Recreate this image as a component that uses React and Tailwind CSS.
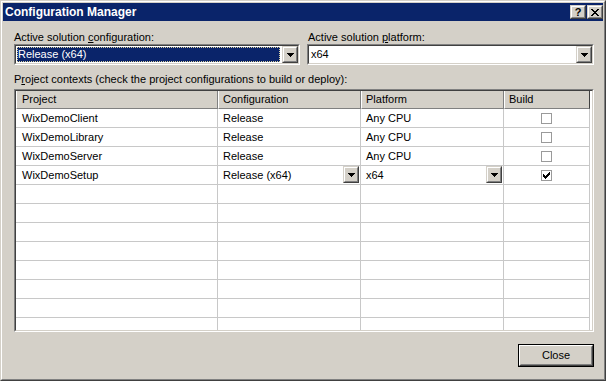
import React from "react";

const FONT = "font-['Liberation_Sans',Arial,sans-serif]";

function Raised({ className = "", children }) {
  return (
    <div className={`border border-t-[#d4d0c8] border-l-[#d4d0c8] border-r-[#404040] border-b-[#404040] bg-[#d4d0c8] shrink-0 ${className}`}>
      <div className="w-full h-full border border-t-white border-l-white border-r-[#808080] border-b-[#808080] flex items-center justify-center">
        {children}
      </div>
    </div>
  );
}

function Arrow() {
  return (
    <svg width="7" height="4" viewBox="0 0 7 4" shapeRendering="crispEdges">
      <rect x="0" y="0" width="7" height="1" fill="#000" />
      <rect x="1" y="1" width="5" height="1" fill="#000" />
      <rect x="2" y="2" width="3" height="1" fill="#000" />
      <rect x="3" y="3" width="1" height="1" fill="#000" />
    </svg>
  );
}

function CloseGlyph() {
  const px = [
    [0, 0, 2], [6, 0, 2],
    [1, 1, 2], [5, 1, 2],
    [2, 2, 4],
    [3, 3, 2],
    [2, 4, 4],
    [1, 5, 2], [5, 5, 2],
    [0, 6, 2], [6, 6, 2],
  ];
  return (
    <svg width="8" height="7" viewBox="0 0 8 7" shapeRendering="crispEdges">
      {px.map(([x, y, w], i) => (
        <rect key={i} x={x} y={y} width={w} height="1" fill="#000" />
      ))}
    </svg>
  );
}

function Check() {
  const px = [
    [6, 0, 1],
    [5, 1, 2],
    [0, 2, 1], [4, 2, 3],
    [0, 3, 2], [3, 3, 3],
    [0, 4, 5],
    [1, 5, 3],
    [2, 6, 1],
  ];
  return (
    <svg width="7" height="7" viewBox="0 0 7 7" shapeRendering="crispEdges">
      {px.map(([x, y, w], i) => (
        <rect key={i} x={x} y={y} width={w} height="1" fill="#000" />
      ))}
    </svg>
  );
}

function Sunken({ className = "", innerClassName = "", children }) {
  return (
    <div className={`border border-t-[#808080] border-l-[#808080] border-r-white border-b-white ${className}`}>
      <div className={`w-full h-full border border-t-[#404040] border-l-[#404040] border-r-[#d4d0c8] border-b-[#d4d0c8] bg-white ${innerClassName}`}>
        {children}
      </div>
    </div>
  );
}

function CheckBox({ checked }) {
  return (
    <div className="w-[11px] h-[11px] border border-[#9a9a9a] bg-white flex items-center justify-center">
      {checked ? <Check /> : null}
    </div>
  );
}

const rows = [
  { p: "WixDemoClient", c: "Release", pl: "Any CPU", b: false },
  { p: "WixDemoLibrary", c: "Release", pl: "Any CPU", b: false },
  { p: "WixDemoServer", c: "Release", pl: "Any CPU", b: false },
  { p: "WixDemoSetup", c: "Release (x64)", pl: "x64", b: true, dd: true },
];

export default function App() {
  const empty = Array.from({ length: 8 });
  return (
    <div className={`w-[606px] h-[381px] ${FONT} text-[11px] leading-[13px] text-black`}>
      <div className="w-full h-full border border-t-[#d4d0c8] border-l-[#d4d0c8] border-r-[#404040] border-b-[#404040] bg-[#d4d0c8]">
        <div className="w-full h-full border border-t-white border-l-white border-r-[#808080] border-b-[#808080] p-px flex flex-col">
          {/* Title bar */}
          <div className="h-[18px] bg-[#0a246a] flex items-center pl-[2px] pr-0 shrink-0">
            <span className="flex-1 text-white font-bold text-[12px] leading-[14px]">
              Configuration Manager
            </span>
            <Raised className="w-[16px] h-[14px]">
              <span className="font-bold text-[11px] leading-[10px] text-black">?</span>
            </Raised>
            <Raised className="w-[16px] h-[14px] ml-[1px]">
              <CloseGlyph />
            </Raised>
          </div>

          {/* Content */}
          <div className="flex-1 flex flex-col pl-[11px] pr-[9px]">
            <div className="grid grid-cols-[286px_287px] gap-x-[7px] mt-[10px]">
              <div className="flex flex-col">
                <div className="h-[13px]">
                  Active solution <span className="underline">c</span>onfiguration:
                </div>
                <Sunken className="h-[21px]" innerClassName="flex items-stretch">
                  <div className="flex-1 my-px ml-px mr-[2px] bg-[#0a246a] border border-dotted border-[#d8cfa0] text-white flex items-center">
                    Release (x64)
                  </div>
                  <Raised className="w-[16px] h-[17px]">
                    <Arrow />
                  </Raised>
                </Sunken>
              </div>
              <div className="flex flex-col">
                <div className="h-[13px] pl-px">
                  Active solution <span className="underline">p</span>latform:
                </div>
                <Sunken className="h-[21px]" innerClassName="flex items-stretch">
                  <div className="flex-1 pl-[2px] flex items-center">x64</div>
                  <Raised className="w-[16px] h-[17px]">
                    <Arrow />
                  </Raised>
                </Sunken>
              </div>
            </div>

            <div className="h-[13px] mt-[8px]">
              P<span className="underline">r</span>oject contexts (check the project configurations to build or deploy):
            </div>

            <Sunken className="h-[243px] mt-[3px]" innerClassName="overflow-hidden">
              {/* header */}
              <div className="flex h-[18px]">
                <div className="w-[202px] h-full bg-[#d4d0c8] border-l border-l-white border-r border-r-[#808080] border-b border-b-[#808080] pl-[5px] flex items-center">Project</div>
                <div className="w-[143px] h-full bg-[#d4d0c8] border-l border-l-white border-r border-r-[#808080] border-b border-b-[#808080] pl-[4px] flex items-center">Configuration</div>
                <div className="w-[143px] h-full bg-[#d4d0c8] border-l border-l-white border-r border-r-[#808080] border-b border-b-[#808080] pl-[4px] flex items-center">Platform</div>
                <div className="w-[86px] h-full bg-[#d4d0c8] border-l border-l-white border-r border-r-[#404040] border-b border-b-[#808080] pl-[4px] flex items-center">Build</div>
              </div>
              {rows.map((r) => (
                <div key={r.p} className="flex h-[19px]">
                  <div className="w-[202px] h-full border-r border-b border-[#c8c8c8] pl-[6px] flex items-center">{r.p}</div>
                  <div className="w-[143px] h-full border-r border-b border-[#c8c8c8] pl-[5px] flex items-center">
                    <span className="flex-1">{r.c}</span>
                    {r.dd ? (
                      <Raised className="w-[16px] h-[17px] mr-px self-start">
                        <Arrow />
                      </Raised>
                    ) : null}
                  </div>
                  <div className="w-[143px] h-full border-r border-b border-[#c8c8c8] pl-[5px] flex items-center">
                    <span className="flex-1">{r.pl}</span>
                    {r.dd ? (
                      <Raised className="w-[16px] h-[17px] mr-px self-start">
                        <Arrow />
                      </Raised>
                    ) : null}
                  </div>
                  <div className="w-[86px] h-full border-r border-b border-[#c8c8c8] flex items-center justify-center">
                    <CheckBox checked={r.b} />
                  </div>
                </div>
              ))}
              {empty.map((_, i) => (
                <div key={i} className="flex h-[19px]">
                  <div className="w-[202px] h-full border-r border-b border-[#c8c8c8]" />
                  <div className="w-[143px] h-full border-r border-b border-[#c8c8c8]" />
                  <div className="w-[143px] h-full border-r border-b border-[#c8c8c8]" />
                  <div className="w-[86px] h-full border-r border-b border-[#c8c8c8]" />
                </div>
              ))}
            </Sunken>

            <div className="self-end mt-[12px] w-[76px] h-[23px] border border-black">
              <div className="w-full h-full border border-t-white border-l-white border-r-[#404040] border-b-[#404040] bg-[#d4d0c8]">
                <div className="w-full h-full border border-t-[#d4d0c8] border-l-[#d4d0c8] border-r-[#808080] border-b-[#808080] flex items-center justify-center">
                  Close
                </div>
              </div>
            </div>
          </div>
        </div>
      </div>
    </div>
  );
}
